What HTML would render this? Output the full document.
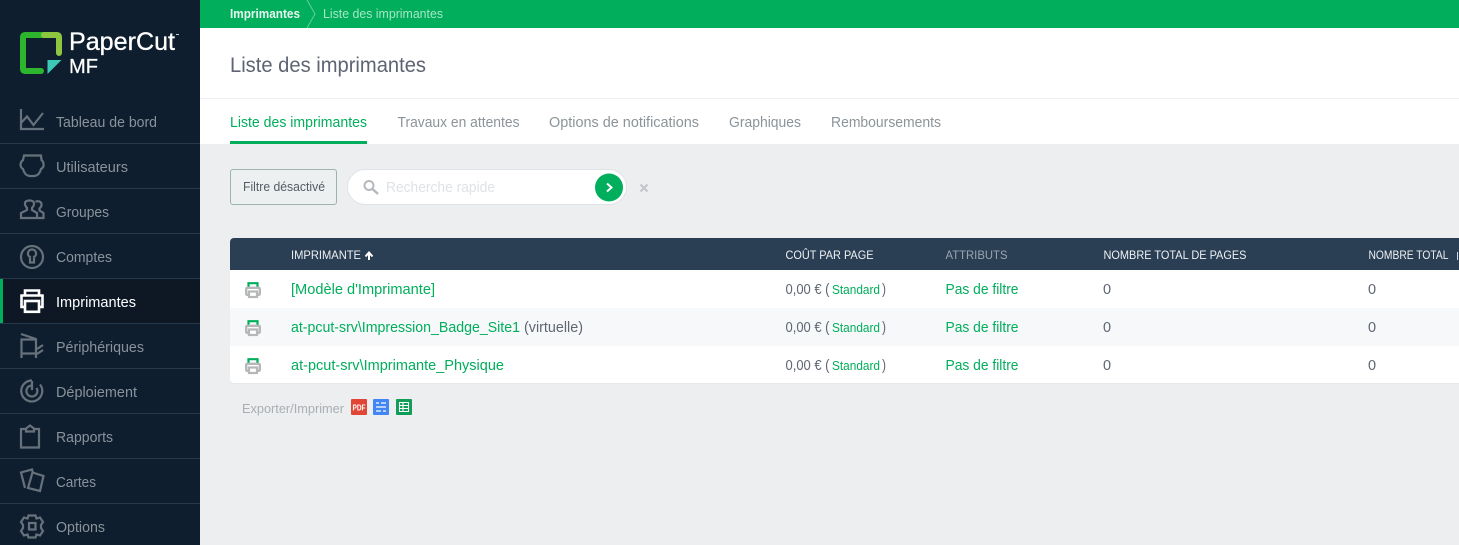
<!DOCTYPE html>
<html><head><meta charset="utf-8"><title>Liste des imprimantes</title>
<style>
html,body{margin:0;padding:0;width:1459px;height:545px;overflow:hidden;background:#edeef0}
svg{display:block}
text{font-family:"Liberation Sans",sans-serif;white-space:pre}
.n{font-size:14.5px;fill:#8a929b}
.i{fill:none;stroke:#67717c;stroke-width:2.2}
.t{font-size:14.5px;fill:#00ae5c}
.g{font-size:14.5px;fill:#5f6672}
.h{font-size:11.5px;fill:#eef1f4}
.tab{font-size:14.5px;fill:#8c9499}
</style></head><body>
<svg width="1459" height="545" viewBox="0 0 1459 545" xmlns="http://www.w3.org/2000/svg">
<rect width="1459" height="545" fill="#edeef0"/>
<!-- top -->
<rect x="200" width="1259" height="28" fill="#00ae5c"/>
<rect x="200" y="28" width="1259" height="116" fill="#fff"/>
<rect x="200" y="98" width="1259" height="1" fill="#eeeef4"/>
<path d="M307 0L315 14L307 28" fill="none" stroke="#66cf9d" stroke-width="1"/>
<text x="230" y="18" font-size="12.500" font-weight="bold" fill="#e8f8f0" textLength="70" lengthAdjust="spacingAndGlyphs">Imprimantes</text>
<text x="323" y="18" font-size="12.500" fill="#a6e6c6" textLength="120" lengthAdjust="spacingAndGlyphs">Liste des imprimantes</text>
<text x="230" y="72" font-size="21" fill="#5f6472" textLength="196" lengthAdjust="spacingAndGlyphs">Liste des imprimantes</text>
<text x="230" y="127" class="tab" style="fill:#00ae5c" textLength="137" lengthAdjust="spacingAndGlyphs">Liste des imprimantes</text>
<text x="397.500" y="127" class="tab" textLength="122" lengthAdjust="spacingAndGlyphs">Travaux en attentes</text>
<text x="549" y="127" class="tab" textLength="150" lengthAdjust="spacingAndGlyphs">Options de notifications</text>
<text x="729" y="127" class="tab" textLength="72" lengthAdjust="spacingAndGlyphs">Graphiques</text>
<text x="831" y="127" class="tab" textLength="110" lengthAdjust="spacingAndGlyphs">Remboursements</text>
<rect x="230" y="141" width="137" height="3" fill="#00ae5c"/>
<!-- filter -->
<rect x="230.5" y="169.5" width="106" height="35" rx="2.5" fill="#edf0f0" stroke="#9db3ae"/>
<text x="243" y="191" font-size="12.500" fill="#555c66" textLength="82" lengthAdjust="spacingAndGlyphs">Filtre désactivé</text>
<rect x="347.5" y="169.5" width="279" height="35" rx="17.5" fill="#fff" stroke="#dfe3e7"/>
<circle cx="369" cy="185.500" r="4.500" fill="none" stroke="#b5b9bd" stroke-width="2"/>
<path d="M372.500 189L378 194" stroke="#b5b9bd" stroke-width="2.500" fill="none"/>
<text x="386" y="192" font-size="14.500" fill="#dfe2e6" textLength="109" lengthAdjust="spacingAndGlyphs">Recherche rapide</text>
<circle cx="609" cy="187.500" r="14" fill="#00ae5c"/>
<path d="M607 183.500L611.500 187.500L607 191.500" fill="none" stroke="#fff" stroke-width="2"/>
<path d="M640.500 184.500L647.500 191.500M647.500 184.500L640.500 191.500" stroke="#c3c6ca" stroke-width="2.200"/>
<!-- table -->
<path d="M230 242a4 4 0 0 1 4-4H1459V270H230Z" fill="#2b3f54"/>
<path d="M230 270H1459V383H234a4 4 0 0 1-4-4Z" fill="#fff"/>
<rect x="230" y="308" width="1229" height="38" fill="#f7f8fa"/>
<rect x="230" y="383" width="1229" height="1" fill="#e6e8ea"/>
<text x="291" y="259" class="h" textLength="70" lengthAdjust="spacingAndGlyphs">IMPRIMANTE</text>
<path d="M369 260V254M365.500 256.500L369 252.500L372.500 256.500" fill="none" stroke="#fff" stroke-width="2"/>
<text x="785.500" y="259" class="h" textLength="88" lengthAdjust="spacingAndGlyphs">COÛT PAR PAGE</text>
<text x="945.500" y="259" class="h" style="fill:#9aa5b0" textLength="62" lengthAdjust="spacingAndGlyphs">ATTRIBUTS</text>
<text x="1103.500" y="259" class="h" textLength="143" lengthAdjust="spacingAndGlyphs">NOMBRE TOTAL DE PAGES</text>
<text x="1368.500" y="259" class="h" textLength="80" lengthAdjust="spacingAndGlyphs">NOMBRE TOTAL</text>
<rect x="1457" y="252" width="1" height="8" fill="#cfd5da"/>
<defs>
<g id="p">
<path d="M3.500 6V1.200H12.500V6" fill="none" stroke="#00ae5c" stroke-width="2.200"/>
<rect x="1.200" y="5.800" width="13.600" height="7" rx="1" fill="none" stroke="#b5b7b8" stroke-width="2.400"/>
<rect x="4" y="9.500" width="8" height="5.500" fill="#fff" stroke="#b5b7b8" stroke-width="2.200"/>
</g>
</defs>
<use href="#p" x="245" y="282"/>
<use href="#p" x="245" y="320"/>
<use href="#p" x="245" y="358"/>
<text x="291" y="294" class="t" textLength="144" lengthAdjust="spacingAndGlyphs">[Modèle d'Imprimante]</text>
<text x="291" y="332" class="t" textLength="229" lengthAdjust="spacingAndGlyphs">at-pcut-srv\Impression_Badge_Site1</text>
<text x="524" y="332" class="g" textLength="59" lengthAdjust="spacingAndGlyphs">(virtuelle)</text>
<text x="291" y="370" class="t" textLength="213" lengthAdjust="spacingAndGlyphs">at-pcut-srv\Imprimante_Physique</text>
<g>
<text x="785.500" y="294" class="g" textLength="44" lengthAdjust="spacingAndGlyphs">0,00 € (</text>
<text x="832" y="294" font-size="12.500" fill="#00ae5c" textLength="48" lengthAdjust="spacingAndGlyphs">Standard</text>
<text x="882" y="294" class="g" textLength="4" lengthAdjust="spacingAndGlyphs">)</text>
<text x="785.500" y="332" class="g" textLength="44" lengthAdjust="spacingAndGlyphs">0,00 € (</text>
<text x="832" y="332" font-size="12.500" fill="#00ae5c" textLength="48" lengthAdjust="spacingAndGlyphs">Standard</text>
<text x="882" y="332" class="g" textLength="4" lengthAdjust="spacingAndGlyphs">)</text>
<text x="785.500" y="370" class="g" textLength="44" lengthAdjust="spacingAndGlyphs">0,00 € (</text>
<text x="832" y="370" font-size="12.500" fill="#00ae5c" textLength="48" lengthAdjust="spacingAndGlyphs">Standard</text>
<text x="882" y="370" class="g" textLength="4" lengthAdjust="spacingAndGlyphs">)</text>
</g>
<text x="945.500" y="294" class="t" textLength="73" lengthAdjust="spacingAndGlyphs">Pas de filtre</text>
<text x="945.500" y="332" class="t" textLength="73" lengthAdjust="spacingAndGlyphs">Pas de filtre</text>
<text x="945.500" y="370" class="t" textLength="73" lengthAdjust="spacingAndGlyphs">Pas de filtre</text>
<text x="1103" y="294" class="g">0</text><text x="1103" y="332" class="g">0</text><text x="1103" y="370" class="g">0</text>
<text x="1368" y="294" class="g">0</text><text x="1368" y="332" class="g">0</text><text x="1368" y="370" class="g">0</text>
<!-- export -->
<text x="242" y="413" font-size="12.500" fill="#a9aeb3" textLength="102" lengthAdjust="spacingAndGlyphs">Exporter/Imprimer</text>
<rect x="351" y="399" width="16" height="16" rx="1" fill="#e04535"/>
<text x="352.500" y="410.500" font-size="8.500" font-weight="bold" fill="#fff" textLength="13" lengthAdjust="spacingAndGlyphs">PDF</text>
<rect x="373" y="399" width="16" height="16" rx="1" fill="#4285f4"/>
<path d="M376 403H379M381 403H386M376 407H386M376 411H381M383 411H386" stroke="#fff" stroke-width="1.200"/>
<rect x="396" y="399" width="16" height="16" rx="1" fill="#0f9d58"/>
<path d="M399.500 402.500H408.500V411.500H399.500ZM399.500 405.500H408.500M399.500 408.500H408.500M403 402.500V411.500" fill="none" stroke="#fff" stroke-width="1.100"/>
<!-- sidebar -->
<rect width="200" height="545" fill="#0f1e2e"/>
<rect y="279" width="200" height="44" fill="#0d1824"/>
<rect y="279" width="3" height="44" fill="#00ae5c"/>
<g fill="#26384a">
<rect y="143" width="200" height="1"/><rect y="188" width="200" height="1"/><rect y="233" width="200" height="1"/><rect y="278" width="200" height="1"/><rect y="323" width="200" height="1"/><rect y="368" width="200" height="1"/><rect y="413" width="200" height="1"/><rect y="458" width="200" height="1"/><rect y="503" width="200" height="1"/>
</g>
<!-- logo -->
<path d="M44 35H25Q23 35 23 37V69Q23 71 25 71H41" fill="none" stroke="#2db52d" stroke-width="6" stroke-linecap="round"/>
<path d="M44 35H57Q59 35 59 37V53" fill="none" stroke="#8ec63f" stroke-width="6" stroke-linecap="round"/>
<path d="M47.500 60H61.500L47.500 74Z" fill="#3cc8b4"/>
<text x="69" y="50" font-size="25" fill="#fff" stroke="#fff" stroke-width=".3" textLength="106" lengthAdjust="spacingAndGlyphs">PaperCut</text>
<text x="69" y="73" font-size="20" fill="#fff" stroke="#fff" stroke-width=".2" textLength="29" lengthAdjust="spacingAndGlyphs">MF</text>
<rect x="176" y="34" width="3" height="1" fill="#c8ccd0"/>
<!-- labels -->
<text x="56" y="127" class="n" textLength="101" lengthAdjust="spacingAndGlyphs">Tableau de bord</text>
<text x="56" y="172" class="n" textLength="72" lengthAdjust="spacingAndGlyphs">Utilisateurs</text>
<text x="56" y="217" class="n" textLength="53" lengthAdjust="spacingAndGlyphs">Groupes</text>
<text x="56" y="262" class="n" textLength="56" lengthAdjust="spacingAndGlyphs">Comptes</text>
<text x="56" y="307" class="n" style="fill:#fff" textLength="80" lengthAdjust="spacingAndGlyphs">Imprimantes</text>
<text x="56" y="352" class="n" textLength="88" lengthAdjust="spacingAndGlyphs">Périphériques</text>
<text x="56" y="397" class="n" textLength="81" lengthAdjust="spacingAndGlyphs">Déploiement</text>
<text x="56" y="442" class="n" textLength="57" lengthAdjust="spacingAndGlyphs">Rapports</text>
<text x="56" y="487" class="n" textLength="40" lengthAdjust="spacingAndGlyphs">Cartes</text>
<text x="56" y="532" class="n" textLength="49" lengthAdjust="spacingAndGlyphs">Options</text>
<!-- icons -->
<path class="i" d="M21 109V129H44M21 123L27 116.500L33.500 125L43 113"/>
<path class="i" d="M24 155.500H41L41.500 160Q44 162 43.500 166Q43 168 41 169Q39 176 34 176H30Q25 176 23 169Q21 168 20.500 165Q20.500 162 23 160Z"/>
<path class="i" d="M21 218V213L27 210V208Q24.500 205 25 203Q25.500 200.500 29.500 200.500Q33.500 200.500 34 203Q34.500 205 32 208V210L37 213V218ZM35.500 201.500Q41 200.500 41.500 204Q42 206 39.500 208.500V210.500L43.500 213V218H37"/>
<circle class="i" cx="32" cy="257" r="11" stroke-width="2.400"/>
<path class="i" d="M32 249.500a4 4 0 0 1 2 7.500V262.500H30V257a4 4 0 0 1 2-7.500Z"/>
<g fill="none" stroke="#fff" stroke-width="2.600">
<path d="M25 296V290.500H39V296"/>
<path d="M25 307H21.500V295.500H42.500V307H39"/>
<rect x="25" y="301" width="14" height="10.800" fill="#0d1824"/>
</g>
<path class="i" d="M21.500 358V339.500H36V358M21 353.500H36M21 334L36 339M37 349L43 345M37 354L43 350"/>
<path class="i" d="M32 380.500A10.500 10.500 0 1 0 40 384.500" stroke-width="3"/>
<path class="i" d="M32 385.500A5.500 5.500 0 1 0 36.500 388" stroke-width="2.500"/>
<path class="i" d="M32 381V390" stroke-width="2.500"/>
<path class="i" d="M26 429H21V447.500H39V429H34"/>
<path class="i" d="M26 431.500V428.500L30 425.500L34 428.500V431.500Z"/>
<path class="i" d="M25 488L21 472.500L32 469.500L33 473"/>
<path class="i" d="M32.500 472.500L43.500 476L40 491L28 488Z"/>
<path class="i" d="M28.500 515.500H35.500L36.500 518.500L40 517.500L43 522L41 525V528L43 531L40 535.500L36.500 534.500L35.500 537.500H28.500L27.500 534.500L24 535.500L21 531L23 528V525L21 522L24 517.500L27.500 518.500Z"/>
<rect class="i" x="29" y="523" width="6.500" height="6.500" stroke-width="2.500"/>
</svg>
</body></html>
